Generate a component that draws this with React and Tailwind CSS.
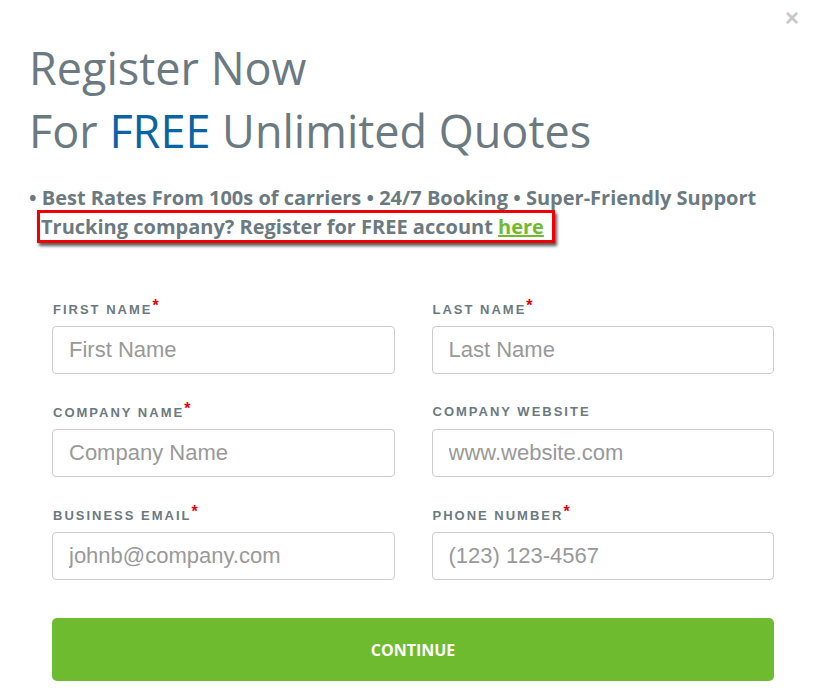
import React from "react";

const fields = [
  { label: "FIRST NAME", required: true, placeholder: "First Name" },
  { label: "LAST NAME", required: true, placeholder: "Last Name" },
  { label: "COMPANY NAME", required: true, placeholder: "Company Name" },
  { label: "COMPANY WEBSITE", required: false, placeholder: "www.website.com" },
  { label: "BUSINESS EMAIL", required: true, placeholder: "johnb@company.com" },
  { label: "PHONE NUMBER", required: true, placeholder: "(123) 123-4567" },
];

const Field = ({ label, required, placeholder }) => (
  <div className="flex flex-col">
    <label className="h-[20px] mb-[7px] pl-px text-[13px] leading-[20px] font-bold tracking-[2px] text-[#6b7a80] font-['Liberation_Sans',Arial,sans-serif]">
      {label}
      {required && (
        <span className="text-[#e8000b] text-[16px] tracking-normal relative -top-[3px]">*</span>
      )}
    </label>
    <input
      type="text"
      placeholder={placeholder}
      className="h-[48px] w-full rounded-[4px] border border-[#cccccc] bg-white px-[16px] text-[22px] text-[#555] placeholder:text-[#999999] font-['Liberation_Sans',Arial,sans-serif] focus:outline-none"
    />
  </div>
);

const App = () => {
  return (
    <div className="relative min-h-screen bg-white font-['Open_Sans',sans-serif]">
      <button className="absolute top-[6px] right-[39px] text-[24px] font-bold leading-none text-[#c8c8c8] font-['Liberation_Sans',Arial,sans-serif]">
        ×
      </button>

      <div className="pt-[36px] pl-[29px]">
        <h1 className="text-[45px] leading-[63px] font-normal text-[#6b7a80]">
          Register Now
          <br />
          For <span className="text-[#0a63a3]">FREE</span> Unlimited Quotes
        </h1>

        <div className="mt-[22px] text-[20px] leading-[28px] font-bold text-[#6b7a80]">
          <p>• Best Rates From 100s of carriers • 24/7 Booking • Super-Friendly Support</p>
          <p className="pl-[8px] -mt-[2px]">
            <span className="inline-block border-[3px] border-[#f00000] pl-px pr-[8px] leading-[27px] shadow-[2px_3px_3px_rgba(0,0,0,0.65)]">
              Trucking company? Register for FREE account{" "}
              <a href="#" className="text-[#6fbb2f] underline">
                here
              </a>
            </span>
          </p>
        </div>
      </div>

      <form className="ml-[52px] mt-[56px] w-[722px]">
        <div className="grid grid-cols-2 gap-x-[37px] gap-y-[28px]">
          {fields.map((f) => (
            <Field key={f.label} {...f} />
          ))}
        </div>
        <button
          type="button"
          className="mt-[38px] h-[63px] w-full rounded-[5px] bg-[#6fbb2f] text-[16px] font-bold text-white"
        >
          CONTINUE
        </button>
      </form>
    </div>
  );
};

export default App;
